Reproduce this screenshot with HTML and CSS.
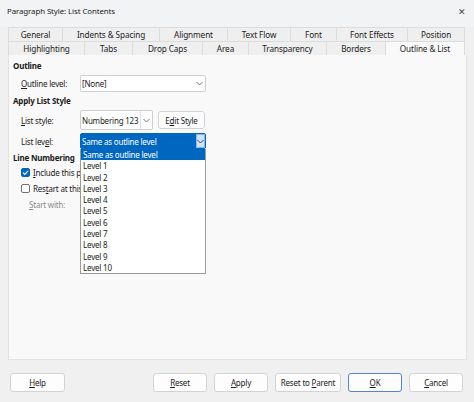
FILE: index.html
```html
<!DOCTYPE html>
<html>
<head>
<meta charset="utf-8">
<link rel="stylesheet" href="styles.css">
</head>
<body>
<div class="window">
  <div class="titlebar">
    <span class="title">Paragraph Style: List Contents</span>
    <span class="close">✕</span>
  </div>
  <div class="tabs">
    <div class="tabrow row1">
      <div class="tab">General</div>
      <div class="tab">Indents &amp; Spacing</div>
      <div class="tab">Alignment</div>
      <div class="tab">Text Flow</div>
      <div class="tab">Font</div>
      <div class="tab">Font Effects</div>
      <div class="tab">Position</div>
    </div>
    <div class="tabrow row2">
      <div class="tab">Highlighting</div>
      <div class="tab">Tabs</div>
      <div class="tab">Drop Caps</div>
      <div class="tab">Area</div>
      <div class="tab">Transparency</div>
      <div class="tab">Borders</div>
      <div class="tab active">Outline &amp; List</div>
    </div>
  </div>
  <div class="panel">
    <div class="heading h-outline">Outline</div>
    <div class="row r-outline">
      <span class="label"><u>O</u>utline level:</span>
      <div class="combo wide">
        <span class="val">[None]</span>
        <span class="arrow"><svg width="7" height="5" viewBox="0 0 7 5"><polyline points="0.5,1 3.5,4 6.5,1" fill="none" stroke="#666" stroke-width="0.9"/></svg></span>
      </div>
    </div>
    <div class="heading h-apply">Apply List Style</div>
    <div class="row r-style">
      <span class="label"><u>L</u>ist style:</span>
      <div class="combo narrow">
        <span class="val">Numbering 123</span>
        <span class="arrow sep"><svg width="7" height="5" viewBox="0 0 7 5"><polyline points="0.5,1 3.5,4 6.5,1" fill="none" stroke="#666" stroke-width="0.9"/></svg></span>
      </div>
      <div class="btn edit"><span>E<u>d</u>it Style</span></div>
    </div>
    <div class="row r-level">
      <span class="label">List lev<u>e</u>l:</span>
      <div class="combo wide selected">
        <span class="val">Same as outline level</span>
        <span class="arrow boxed"><svg width="7" height="5" viewBox="0 0 7 5"><polyline points="0.5,1 3.5,4 6.5,1" fill="none" stroke="#335" stroke-width="0.9"/></svg></span>
      </div>
      <div class="popup">
        <div class="item hl">Same as outline level</div>
        <div class="item">Level 1</div>
        <div class="item">Level 2</div>
        <div class="item">Level 3</div>
        <div class="item">Level 4</div>
        <div class="item">Level 5</div>
        <div class="item">Level 6</div>
        <div class="item">Level 7</div>
        <div class="item">Level 8</div>
        <div class="item">Level 9</div>
        <div class="item">Level 10</div>
      </div>
    </div>
    <div class="heading h-line">Line Numbering</div>
    <div class="check c1">
      <span class="box on"><svg width="9" height="9" viewBox="0 0 9 9"><polyline points="2,4.6 3.8,6.4 7,2.8" fill="none" stroke="#fff" stroke-width="1.1"/></svg></span>
      <span class="ctext"><u>I</u>nclude this paragraph in line numbering</span>
    </div>
    <div class="check c2">
      <span class="box"></span>
      <span class="ctext">Res<u>t</u>art at this paragraph</span>
    </div>
    <div class="startwith"><u>S</u>tart with:</div>
  </div>
  <div class="buttons">
    <div class="btn b-help"><span><u>H</u>elp</span></div>
    <div class="spacer"></div>
    <div class="btn b-std"><span><u>R</u>eset</span></div>
    <div class="btn b-std"><span><u>A</u>pply</span></div>
    <div class="btn b-parent"><span>Reset to <u>P</u>arent</span></div>
    <div class="btn b-std ok"><span><u>O</u>K</span></div>
    <div class="btn b-std"><span><u>C</u>ancel</span></div>
  </div>
</div>
</body>
</html>
```
FILE: styles.css
```css
* { box-sizing: border-box; }
html, body {
  margin: 0;
  padding: 0;
  width: 474px;
  height: 402px;
  overflow: hidden;
  background: #f0f0f0;
}
body {
  font-family: "Noto Sans", "Open Sans", sans-serif;
  font-size: 8px;
  letter-spacing: -0.2px;
  color: #1b1b1b;
}
u { text-decoration: underline; text-underline-offset: 1px; text-decoration-thickness: 0.7px; }
.window {
  width: 474px;
  height: 402px;
  display: flex;
  flex-direction: column;
  background: #f0f0f0;
  position: relative;
}
.titlebar {
  height: 27px;
  display: flex;
  align-items: flex-start;
  justify-content: space-between;
  padding: 4px 8px 0 7px;
  background: #f2f3f5;
}
.title { font-size: 7.9px; line-height: 15px; letter-spacing: -0.1px; }
.close { font-size: 9px; line-height: 15px; color: #444; }
.tabs {
  margin-left: 8px;
  width: 457px;
}
.tabrow {
  display: grid;
  height: 14px;
}
.row1 { grid-template-columns: 55px 97px 68px 63px 46px 71px 57px; }
.row2 { grid-template-columns: 77px 48px 70px 46px 78px 59px 79px; }
.tab {
  border-top: 1px solid #dcdcdc;
  border-right: 1px solid #dcdcdc;
  background: #efefef;
  text-align: center;
  line-height: 13px;
  font-size: 8.2px;
  letter-spacing: -0.1px;
  color: #222;
  white-space: nowrap;
}
.tab:first-child { border-left: 1px solid #dcdcdc; }
.tab.active { background: #f9f9f9; }
.panel {
  margin-left: 8px;
  width: 459px;
  height: 305px;
  background: #f9f9f9;
  border: 1px solid #e2e2e2;
  border-top: none;
  position: relative;
  padding: 4px 0 0 4px;
  display: flex;
  flex-direction: column;
}
.heading { font-weight: bold; font-size: 8px; line-height: 12px; height: 12px; }
.h-outline { margin-top: 1px; }
.row {
  display: flex;
  align-items: center;
  position: relative;
}
.label { width: 67px; padding-left: 8px; white-space: nowrap; }
.combo {
  background: #fff;
  border: 1px solid #cfcfcf;
  border-radius: 2px;
  display: flex;
  align-items: center;
  padding-left: 1px;
  position: relative;
}
.combo .val { flex: 1; white-space: nowrap; overflow: hidden; }
.combo .arrow {
  width: 12px;
  flex: none;
  height: 100%;
  display: flex;
  align-items: center;
  justify-content: center;
}
.combo .arrow.sep { border-left: 1px solid #e0e0e0; }
.wide { width: 126px; }
.r-outline { margin-top: 3px; height: 17px; }
.r-outline .combo { height: 17px; }
.h-apply { margin-top: 3px; }
.r-style { margin-top: 3px; height: 20px; }
.narrow { width: 73px; height: 20px; }
.btn {
  background: #fdfdfd;
  border: 1px solid #d3d3d3;
  border-radius: 3px;
  display: flex;
  align-items: center;
  justify-content: center;
  white-space: nowrap;
}
.edit { width: 47px; height: 18px; margin-left: 5px; }
.r-level { margin-top: 3px; height: 16px; }
.selected {
  height: 16px;
  background: #0067c0;
  border-color: #0067c0;
  color: #fff;
}
.arrow.boxed {
  background: #cfe3f7;
  border: 1px solid #8fb6e0;
  width: 9px;
  height: 14px;
}
.popup {
  position: absolute;
  left: 67px;
  top: 16px;
  width: 126px;
  background: #fff;
  border: 1px solid #9a9a9a;
  border-top: none;
  z-index: 5;
}
.item {
  height: 11.3px;
  line-height: 11.3px;
  padding-left: 2px;
  white-space: nowrap;
}
.item.hl { background: #0067c0; color: #fff; }
.h-line { margin-top: 3px; }
.check {
  display: flex;
  align-items: center;
  gap: 3px;
  padding-left: 8px;
  height: 16px;
  white-space: nowrap;
}
.ctext {
  max-width: 47px;
  overflow: hidden;
}
.box {
  width: 9px;
  height: 9px;
  flex: none;
  border: 1px solid #707070;
  border-radius: 2px;
  background: #fff;
  display: inline-flex;
}
.box.on { background: #0067c0; border-color: #0067c0; }
.box svg { margin: -1px; }
.startwith { padding-left: 16px; margin-top: 3px; color: #8c8c8c; line-height: 12px; }
.buttons {
  display: flex;
  align-items: center;
  padding: 13px 11px 0 10px;
  gap: 7px;
}
.buttons .btn { height: 19px; }
.spacer { flex: 1; }
.b-help { width: 55px; }
.b-std { width: 54px; }
.b-parent { width: 66px; }
.ok { border-color: #4f86cf; }
```
